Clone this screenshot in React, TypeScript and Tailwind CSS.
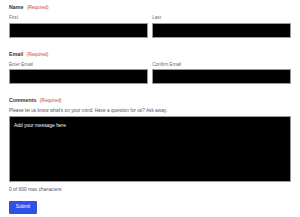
import React from 'react';

function Required() {
    return <span className="ml-[2px] text-[4.6px] font-normal text-[#c8473a]">(Required)</span>;
}

function Field({ label }: { label: string }) {
    return (
        <div className="flex flex-col">
            <span className="text-[4.6px] leading-[5px] text-[#6b6b6b]">{label}</span>
            <div className="mt-[2.5px] h-[15px] bg-black border border-[#9a9a9a]"></div>
        </div>
    );
}

export default function App() {
    return (
        <div
            className="w-[300px] h-[217px] bg-white px-[9px] pt-[4px] overflow-hidden"
            style={{ fontFamily: '"Liberation Sans", Arial, sans-serif' }}
        >
            {/* Name */}
            <div className="text-[5.3px] leading-[6px] font-bold text-[#333]">
                Name <Required />
            </div>
            <div className="mt-[4px] grid grid-cols-2 gap-x-[4.5px]">
                <Field label="First" />
                <Field label="Last" />
            </div>

            {/* Email */}
            <div className="mt-[13px] text-[5.3px] leading-[6px] font-bold text-[#333]">
                Email <Required />
            </div>
            <div className="mt-[4px] grid grid-cols-2 gap-x-[4.5px]">
                <Field label="Enter Email" />
                <Field label="Confirm Email" />
            </div>

            {/* Comments */}
            <div className="mt-[13px] text-[5.3px] leading-[6px] font-bold text-[#333]">
                Comments <Required />
            </div>
            <p className="mt-[3.5px] text-[4.75px] leading-[5px] text-[#555]">
                Please let us know what's on your mind. Have a question for us? Ask away.
            </p>
            <div className="mt-[3.5px] h-[66px] bg-black border border-[#9a9a9a] px-[4px] pt-[6px] text-[4.9px] leading-[6px] text-white">
                Add your message here
            </div>
            <p className="mt-[4.5px] text-[4.9px] leading-[5px] text-[#555]">0 of 600 max characters</p>

            <button className="mt-[9px] w-[28px] h-[13px] bg-[#3050ea] rounded-[1px] text-[4.6px] text-white flex items-center justify-center">
                Submit
            </button>
        </div>
    );
}
